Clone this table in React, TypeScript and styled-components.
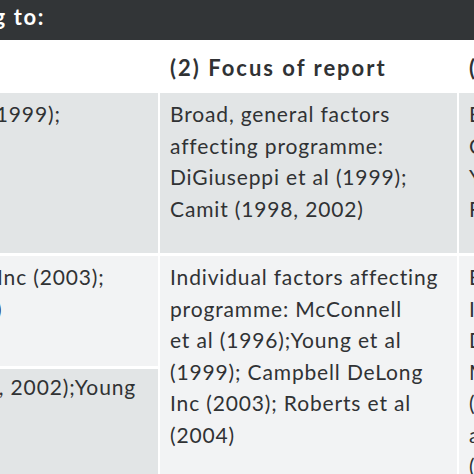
import styled, { createGlobalStyle } from "styled-components";

const GlobalStyle = createGlobalStyle`
  html, body {
    margin: 0;
    padding: 0;
    background: #ffffff;
    overflow: hidden;
  }
  body {
    width: 474px;
    height: 474px;
    font-family: Lato, "Open Sans", sans-serif;
    color: #303234;
  }
`;

const Viewport = styled.div`
  width: 474px;
  height: 474px;
  overflow: hidden;
`;

const Sheet = styled.div`
  margin-left: -206px;
  width: 900px;
`;

const TitleBar = styled.div`
  height: 40px;
  background: #323537;
  color: #ffffff;
  font-weight: 700;
  font-size: 22px;
  letter-spacing: 1.6px;
  line-height: 34px;
  padding-left: 14px;
  white-space: nowrap;
`;

const Table = styled.div`
  display: grid;
  grid-template-columns: 364px 297px 1fr;
  grid-template-rows: 50px 160px 260px;
  column-gap: 2px;
  row-gap: 3px;
  background: #ffffff;
`;

const HeadCell = styled.div`
  background: #ffffff;
  font-weight: 700;
  font-size: 22px;
  letter-spacing: 2px;
  line-height: 31px;
  padding: 12px 10px 0;
  white-space: nowrap;
`;

const Cell = styled.div<{ $tone: "mid" | "light" }>`
  background: ${(p) => (p.$tone === "mid" ? "#e2e5e6" : "#f2f3f4")};
  font-size: 21px;
  letter-spacing: 0.85px;
  line-height: 31.5px;
  padding: 5px 10px 0;
  white-space: nowrap;
  overflow: hidden;
`;

const SplitCell = styled.div`
  display: flex;
  flex-direction: column;
  gap: 3px;
`;

const SubCell = styled(Cell)`
  flex: ${(p) => (p.$tone === "light" ? "0 0 105px" : "1")};
  padding-top: ${(p) => (p.$tone === "light" ? "5px" : "2px")};
`;

const Line = styled.div``;

const lines = (items: string[]) => items.map((t, i) => <Line key={i}>{t}</Line>);

export default function App() {
  return (
    <Viewport>
      <GlobalStyle />
      <Sheet>
        <TitleBar>Studies according to:</TitleBar>
        <Table>
          <HeadCell>(1) Study</HeadCell>
          <HeadCell>(2) Focus of report</HeadCell>
          <HeadCell>(3) Methods</HeadCell>

          <Cell $tone="mid">{lines(["McConnell, Young (1999);"])}</Cell>
          <Cell $tone="mid">
            {lines([
              "Broad, general factors",
              "affecting programme:",
              "DiGiuseppi et al (1999);",
              "Camit (1998, 2002)",
            ])}
          </Cell>
          <Cell $tone="mid">
            {lines([
              "Before and after design",
              "Campbell DeLong Inc (2003);",
              "Young et al (1999);",
              "Focus groups (2004)",
            ])}
          </Cell>

          <SplitCell>
            <SubCell $tone="light">{lines(["Campbell, DeLong, Inc (2003);", "Roberts et al (2004)"])}</SubCell>
            <SubCell $tone="mid">{lines(["(1999);Camit (1998, 2002);Young"])}</SubCell>
          </SplitCell>
          <Cell $tone="light">
            {lines([
              "Individual factors affecting",
              "programme: McConnell",
              "et al (1996);Young et al",
              "(1999); Campbell DeLong",
              "Inc (2003); Roberts et al",
              "(2004)",
            ])}
          </Cell>
          <Cell $tone="light">
            {lines([
              "Before and after design:",
              "Individual interviews",
              "DiGiuseppi et al (1999);",
              "McConnell et al (1996);",
              "(1999); Campbell DeLong",
              "and Roberts et al",
              "(2004)",
            ])}
          </Cell>
        </Table>
      </Sheet>
    </Viewport>
  );
}
